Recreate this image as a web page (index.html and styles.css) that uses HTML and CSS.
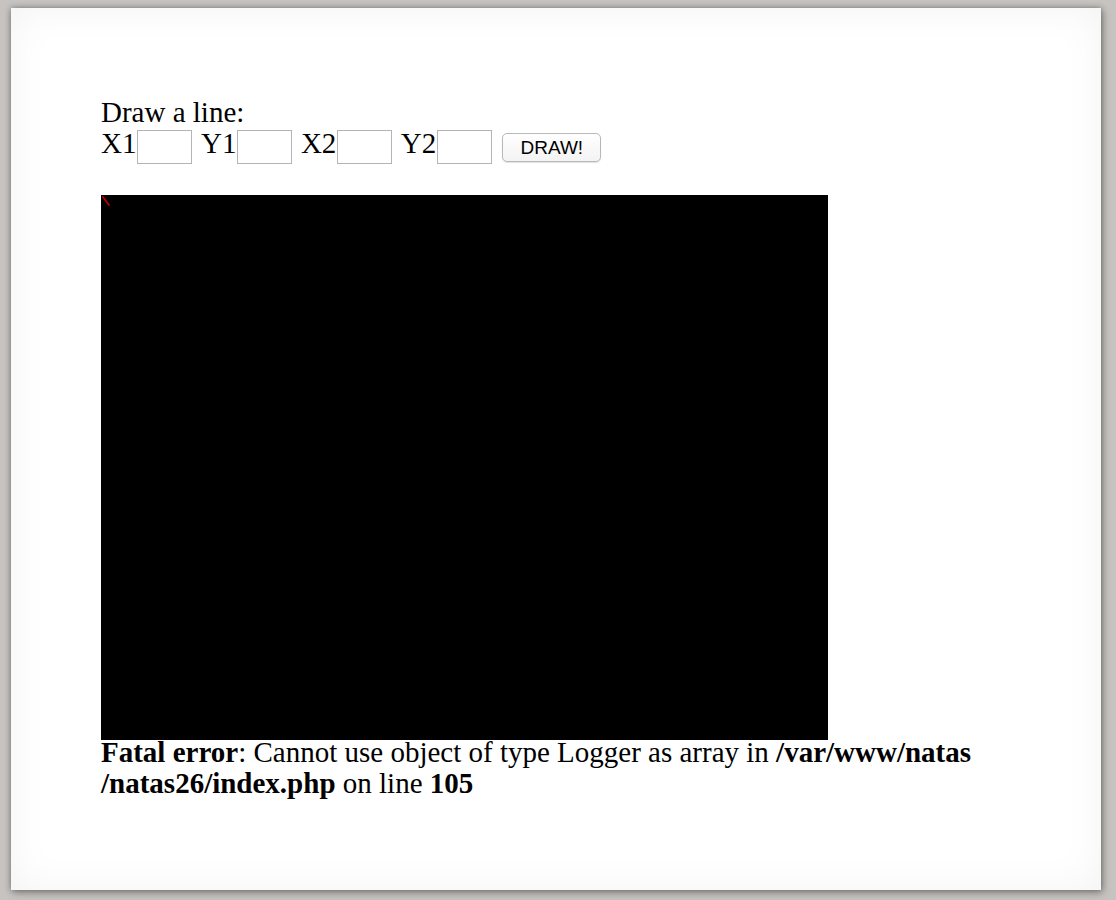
FILE: index.html
```html
<!DOCTYPE html>
<html>
<head>
<meta charset="utf-8">
<link rel="stylesheet" href="styles.css">
</head>
<body>
<div class="page">
  <div class="content">
    <form class="form">
      <div class="title">Draw a line:</div>
      <div class="row">
        <span class="lbl">X1</span><input class="coord" type="text">
        <span class="lbl sp">Y1</span><input class="coord" type="text">
        <span class="lbl sp">X2</span><input class="coord" type="text">
        <span class="lbl sp">Y2</span><input class="coord" type="text">
        <button class="draw" type="button">DRAW!</button>
      </div>
    </form>
    <div class="canvas">
      <svg class="mark" width="12" height="12" viewBox="0 0 12 12"><line x1="2" y1="2" x2="8" y2="10" stroke="#b00000" stroke-width="2" stroke-linecap="round"/></svg>
    </div>
    <div class="error"><b>Fatal error</b>: Cannot use object of type Logger as array in <b>/var/www/natas<br>/natas26/index.php</b> on line <b>105</b></div>
  </div>
</div>
</body>
</html>
```
FILE: styles.css
```css
html, body {
  margin: 0;
  padding: 0;
}
body {
  background: #c6c3c0;
  width: 1116px;
  height: 900px;
  overflow: hidden;
}
.page {
  margin: 8px 0 0 11px;
  width: 1090px;
  height: 882px;
  background: #ffffff;
  box-shadow: 0 0 6px rgba(0,0,0,0.35), 2px 3px 8px rgba(0,0,0,0.25), inset 0 0 40px rgba(0,0,0,0.05);
  overflow: hidden;
}
.content {
  padding: 88px 0 0 90px;
  font-family: "Liberation Serif", "Times New Roman", serif;
  font-size: 29px;
  color: #000;
}
.title {
  line-height: 33px;
  height: 33px;
}
.row {
  display: flex;
  align-items: flex-start;
  margin-top: 1px;
  height: 34px;
}
.lbl {
  line-height: 33px;
  margin-top: -3px;
  margin-right: 1px;
}
.lbl.sp {
  margin-left: 8.5px;
}
.coord {
  width: 55px;
  height: 34px;
  box-sizing: border-box;
  margin: 0;
  padding: 0;
  border: 1px solid #b4b4b4;
  background: #fff;
  outline: none;
}
.draw {
  margin: 3px 0 0 10px;
  width: 99px;
  height: 29px;
  box-sizing: border-box;
  border: 1px solid #b8b8b8;
  border-radius: 5px;
  background: linear-gradient(#ffffff, #f3f3f3);
  box-shadow: 0 1px 1px rgba(0,0,0,0.12);
  font-family: "Liberation Sans", Arial, sans-serif;
  font-size: 19px;
  color: #000;
  padding: 0;
  line-height: 27px;
}
.canvas {
  margin-top: 31px;
  width: 727px;
  height: 545px;
  background: #000;
  position: relative;
}
.mark {
  position: absolute;
  left: 0;
  top: 0;
  filter: blur(0.4px);
}
.error {
  line-height: 31px;
  margin-top: -3px;
}
.error b {
  font-weight: bold;
}
```
